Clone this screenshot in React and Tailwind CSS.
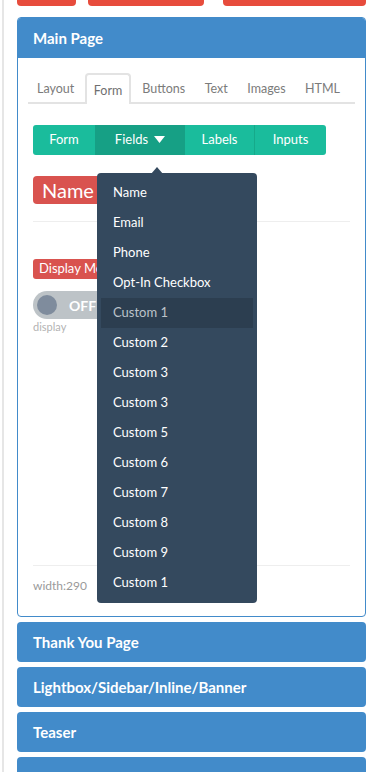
import React from "react";

const tabs = ["Layout", "Form", "Buttons", "Text", "Images", "HTML"];
const fields = [
  "Name",
  "Email",
  "Phone",
  "Opt-In Checkbox",
  "Custom 1",
  "Custom 2",
  "Custom 3",
  "Custom 3",
  "Custom 5",
  "Custom 6",
  "Custom 7",
  "Custom 8",
  "Custom 9",
  "Custom 1",
];

function PanelHeader({ title }) {
  return (
    <div className="flex h-[40px] items-center rounded-[4px] bg-[#428bca] px-[16px] text-[15px] font-bold text-white">
      {title}
    </div>
  );
}

export default function App() {
  return (
    <div
      className="relative h-[772px] w-[381px] overflow-hidden bg-white"
      style={{ fontFamily: "Lato, 'Open Sans', sans-serif" }}
    >
      {/* left rule */}
      <div className="absolute left-[2px] top-0 h-full w-[2px] bg-[#e6e6e6]" />

      <div className="flex flex-col px-[17px] pr-[15px]">
        {/* top red buttons */}
        <div className="flex h-[6px] gap-0">
          <div className="w-[59px] rounded-b-[4px] bg-[#e74c3c]" />
          <div className="ml-[12px] w-[116px] rounded-b-[4px] bg-[#e74c3c]" />
          <div className="ml-[19px] w-[143px] rounded-b-[4px] bg-[#e74c3c]" />
        </div>

        {/* main page panel */}
        <div className="mt-[11px] flex h-[600px] flex-col rounded-[4px] border border-[#428bca]">
          <div className="flex h-[40px] items-center rounded-t-[3px] bg-[#428bca] px-[15px] text-[15px] font-bold text-white">
            Main Page
          </div>
          <div className="relative flex flex-1 flex-col px-[15px]">
            {/* tabs */}
            <div className="ml-[-5px] mr-[-5px] mt-[14px] flex h-[32px] items-stretch border-b-2 border-[#e3e3e3] pt-[1px] text-[12.5px] text-[#7b7b7b]">
              {tabs.map((t) => (
                <div
                  key={t}
                  className={
                    t === "Form"
                      ? "mb-[-2px] mr-[2px] flex items-center rounded-t-[4px] border-2 border-b-0 border-[#e3e3e3] bg-white px-[7px] pt-[3px] text-[#6f6f6f]"
                      : "mr-[1.5px] flex items-center px-[9px] pt-[3px]"
                  }
                >
                  {t}
                </div>
              ))}
            </div>

            {/* button group */}
            <div className="mt-[21px] flex h-[30px] w-[293px] overflow-hidden rounded-[3px] text-[13px] text-white">
              <div className="flex w-[62px] items-center justify-center bg-[#1abc9c]">Form</div>
              <div className="flex w-[90px] items-center justify-center gap-[6px] bg-[#16a085]">
                Fields
                <svg width="11" height="8" viewBox="0 0 11 8">
                  <path d="M0 0h11L5.5 7z" fill="#fff" />
                </svg>
              </div>
              <div className="flex w-[70px] items-center justify-center border-r border-[#16a98a] bg-[#1abc9c]">Labels</div>
              <div className="flex flex-1 items-center justify-center bg-[#1abc9c]">Inputs</div>
            </div>

            {/* name label */}
            <div className="mt-[21px] flex h-[28px] w-fit items-center rounded-[4px] bg-[#d9534f] px-[9px] text-[20px] leading-none text-white">
              Name
            </div>
            <div className="mt-[17px] h-px bg-[#eeeeee]" />

            <div className="mt-[37px] flex h-[20px] w-fit items-center rounded-[3px] bg-[#d9534f] px-[6px] text-[13px] text-white">
              Display Method
            </div>

            <div className="mt-[12px] flex h-[28px] w-[80px] items-center rounded-full bg-[#bdc3c7] pl-[4px]">
              <div className="h-[20px] w-[20px] rounded-full bg-[#7f8c9d]" />
              <span className="ml-[12px] text-[14px] font-bold text-white">OFF</span>
            </div>
            <div className="mt-[1px] text-[11px] leading-[14px] text-[#b3b3b3]">display</div>

            <div className="mt-auto h-px bg-[#eeeeee]" />
            <div className="mb-[22px] mt-[12px] text-[12px] leading-[16px] text-[#9a9a9a]">width:290</div>

            {/* dropdown */}
            <div className="absolute left-[79px] top-[115px] w-[160px] rounded-[4px] bg-[#34495e] py-[5px]">
              <svg className="absolute left-[54px] top-[-6px]" width="12" height="7" viewBox="0 0 12 7">
                <path d="M0 7L6 0l6 7z" fill="#34495e" />
              </svg>
              {fields.map((f, i) => (
                <div
                  key={i}
                  className={
                    i === 4
                      ? "mx-[4px] flex h-[30px] items-center bg-[#2c3e50] px-[12px] text-[13px] text-[#bcc3ca]"
                      : "mx-[4px] flex h-[30px] items-center px-[12px] text-[13px] text-white"
                  }
                >
                  {f}
                </div>
              ))}
            </div>
          </div>
        </div>

        <div className="mt-[5px] flex flex-col gap-[5px]">
          <PanelHeader title="Thank You Page" />
          <PanelHeader title="Lightbox/Sidebar/Inline/Banner" />
          <PanelHeader title="Teaser" />
          <PanelHeader title="" />
        </div>
      </div>
    </div>
  );
}
